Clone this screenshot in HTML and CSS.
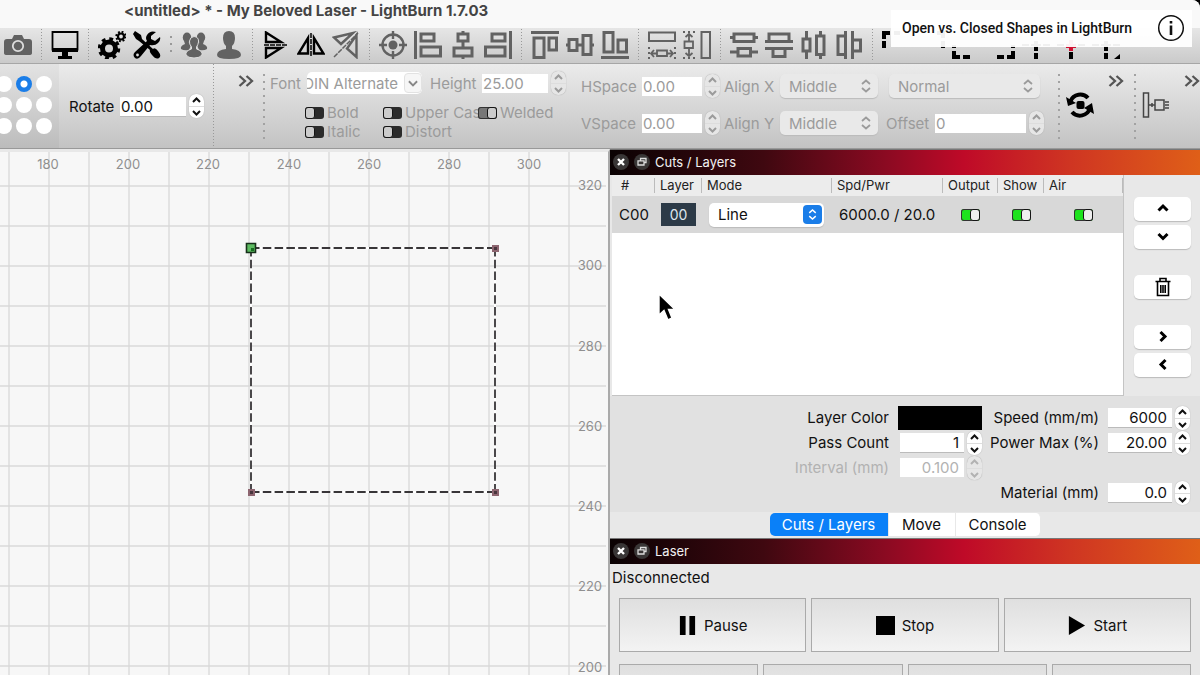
FILE: index.html
```html
<!DOCTYPE html>
<html lang="en">
<head>
<meta charset="utf-8">
<title>My Beloved Laser - LightBurn 1.7.03</title>
<link rel="stylesheet" href="styles.css">
</head>
<body>
<svg class="defs" aria-hidden="true">
  <symbol id="up" viewBox="0 0 14 12"><path d="M3.500 8 7 4.500 10.500 8" fill="none" stroke="currentColor" stroke-width="2"/></symbol>
  <symbol id="down" viewBox="0 0 14 12"><path d="M3.500 4 7 7.500 10.500 4" fill="none" stroke="currentColor" stroke-width="2"/></symbol>
  <symbol id="updown" viewBox="0 0 12 16"><path d="M2 6 6 2.500 10 6M2 10 6 13.500 10 10" fill="none" stroke="currentColor" stroke-width="1.800"/></symbol>
  <symbol id="more" viewBox="0 0 16 12"><path d="M1.500 1 7 6 1.500 11M8.500 1 14 6 8.500 11" fill="none" stroke="currentColor" stroke-width="2.300"/></symbol>
  <symbol id="close" viewBox="0 0 16 16"><circle cx="8" cy="8" r="8" fill="#393636"/><path d="M5 5 11 11M11 5 5 11" stroke="#fff" stroke-width="2.400"/></symbol>
  <symbol id="float" viewBox="0 0 16 16"><circle cx="8" cy="8" r="8" fill="#393636"/><path d="M6.500 6.500V4.500H12V8.500H10M4 6.800H10V11H4Z" fill="none" stroke="#ddd" stroke-width="1.300"/></symbol>
</svg>
<div class="app">
  <header class="titlebar"><h1>&lt;untitled&gt; * - My Beloved Laser - LightBurn 1.7.03</h1></header>

  <nav class="tools" aria-label="Main tools">
    <button class="tool grey" aria-label="Camera"><svg viewBox="0 0 28 28"><path d="M3 8H8L10 4H18L20 8H25Q28 8 28 11V22Q28 24 25 24H3Q0 24 0 22V11Q0 8 3 8Z" fill="currentColor"/><circle cx="14" cy="15" r="5.200" fill="none" stroke="#ddd" stroke-width="1.800"/></svg></button>
    <i class="sep"></i>
    <button class="tool" aria-label="Preview"><svg viewBox="0 0 28 28"><path d="M1.500 1H26.500V18.500H1.500Z" fill="none" stroke="currentColor" stroke-width="1.800"/><path d="M1 17H27V21H1ZM11 21H17V25H21V28H7V25H11Z" fill="currentColor"/></svg></button>
    <i class="sep"></i>
    <button class="tool" aria-label="Settings"><svg viewBox="0 0 28 28"><circle cx="11" cy="17.500" r="6.500" fill="none" stroke="currentColor" stroke-width="5"/><circle cx="11" cy="17.500" r="9.500" fill="none" stroke="currentColor" stroke-width="3.500" stroke-dasharray="3.730 3.730"/><circle cx="23" cy="5.500" r="3" fill="none" stroke="currentColor" stroke-width="2.200"/><circle cx="23" cy="5.500" r="4.700" fill="none" stroke="currentColor" stroke-width="2" stroke-dasharray="1.850 1.850"/></svg></button>
    <button class="tool" aria-label="Device settings"><svg viewBox="0 0 28 28"><path d="M2 0 8 4 9 8 20 18Q22 16 25 20Q29 25 26 27Q23 29 19 24Q16 21 17 19L6 10 3 8 0 3Z" fill="currentColor"/><path d="M27 6 22 10 18 8 18 5 23 1Q17-1 14 4Q12 7 14 10L2 21Q-1 24 2 27Q5 29 8 25L17 14Q22 15 25 12Q28 9 27 6Z" fill="currentColor"/><circle cx="4.500" cy="24" r="1.400" fill="#ddd"/></svg></button>
    <i class="sep grip"></i>
    <button class="tool grey" aria-label="Group"><svg viewBox="0 0 28 28"><g id="pair"><ellipse cx="7" cy="6.500" rx="4.200" ry="5" fill="currentColor"/><path d="M4 10 5 13Q0 15 1 18Q4 20 9 19L12 12Z" fill="currentColor"/></g><use href="#pair" transform="matrix(-1 0 0 1 28 0)"/><path d="M14 5.500Q19 6 18.500 11 18 14 16.500 16V18Q23 20 22 24Q20 27 14 27T6 24Q5 20 11.500 18V16Q9 13 9.500 10 10 6 14 5.500Z" fill="currentColor" stroke="#ddd" stroke-width="1"/></svg></button>
    <button class="tool grey" aria-label="Ungroup"><svg viewBox="0 0 28 28"><path d="M14 0Q20 0 20 7Q20 12 17 15V18Q26 19 26 24Q26 28 14 28T2 24Q2 19 11 18V15Q8 12 8 7Q8 0 14 0Z" fill="currentColor"/></svg></button>
    <i class="sep"></i>
    <button class="tool" aria-label="Flip vertical"><svg viewBox="0 0 28 28" fill="none" stroke="currentColor" stroke-width="2.400"><path d="M4 1.500V11H19ZM4 26.500V17H19Z"/><path d="M2 14H25" stroke-width="1.500" stroke-dasharray="5 1"/></svg></button>
    <button class="tool" aria-label="Flip horizontal"><svg viewBox="0 0 28 28" fill="none" stroke="currentColor" stroke-width="2.400"><path d="M1.500 22.500H11V7ZM26.500 22.500H17V7Z"/><path d="M14 2V26" stroke-width="1.500" stroke-dasharray="5 1"/></svg></button>
    <button class="tool grey" aria-label="Mirror across line"><svg viewBox="0 0 28 28" fill="none" stroke="currentColor" stroke-width="2.400"><path d="M2 6.500 21 2 9 13ZM24.500 4V26L15 17.500Z"/><path d="M2 26 26 2" stroke-width="1.500" stroke-dasharray="5 1"/></svg></button>
    <i class="sep"></i>
    <button class="tool grey" aria-label="Centre on page"><svg viewBox="0 0 28 28" fill="none" stroke="currentColor" stroke-width="2.400"><circle cx="14" cy="14" r="10.500"/><circle cx="14" cy="14" r="4.500" fill="currentColor" stroke="none"/><path d="M14 0V8M14 20V28M0 14H8M20 14H28"/></svg></button>
    <button class="tool grey" aria-label="Align left"><svg viewBox="0 0 28 28" fill="none" stroke="currentColor" stroke-width="3"><path d="M1.500 0V28M7 3H20V10H7ZM7 16H26.500V25H7Z"/></svg></button>
    <button class="tool grey" aria-label="Align centres vertically"><svg viewBox="0 0 28 28" fill="none" stroke="currentColor" stroke-width="3"><path d="M9 3H19V10H9ZM5 17H23V25H5ZM14 0V3M14 10V17M14 25V28"/></svg></button>
    <button class="tool grey" aria-label="Align right"><svg viewBox="0 0 28 28" fill="none" stroke="currentColor" stroke-width="3"><path d="M26.500 0V28M8 3H21V10H8ZM1.500 16H21V25H1.500Z"/></svg></button>
    <i class="sep"></i>
    <button class="tool grey" aria-label="Align top"><svg viewBox="0 0 28 28" fill="none" stroke="currentColor" stroke-width="3"><path d="M0 1.500H28M3 7H13V26.500H3ZM18 7H25.500V19H18Z"/></svg></button>
    <button class="tool grey" aria-label="Align centres horizontally"><svg viewBox="0 0 28 28" fill="none" stroke="currentColor" stroke-width="3"><path d="M3 8.500H11V19.500H3ZM17 4.500H25V23.500H17ZM0 14H3M11 14H17M25 14H28"/></svg></button>
    <button class="tool grey" aria-label="Align bottom"><svg viewBox="0 0 28 28" fill="none" stroke="currentColor" stroke-width="3"><path d="M0 26.500H28M3 1.500H12V21H3ZM17 9H25.500V21H17Z"/></svg></button>
    <i class="sep"></i>
    <button class="tool grey" aria-label="Same width"><svg viewBox="0 0 28 28" fill="none" stroke="currentColor" stroke-width="2"><path d="M1 1.500H27V10H1Z"/><path d="M9 19.500H19V25H9ZM3 22.500H9M19 22.500H25M6 19 3 22.500 6 26M22 19 25 22.500 22 26" stroke-width="1.800"/><path d="M1 16V28M27 16V28" stroke-dasharray="2 3"/></svg></button>
    <button class="tool grey" aria-label="Same height"><svg viewBox="0 0 28 28" fill="none" stroke="currentColor" stroke-width="2"><path d="M18.500 1H27V27H18.500Z"/><path d="M1.500 10.500H10V17H1.500ZM6 3V10M6 17V25M2.500 6 6 3 9.500 6M2.500 22 6 25 9.500 22" stroke-width="1.800"/><path d="M0 1H12M0 27H12" stroke-dasharray="2 3"/></svg></button>
    <i class="sep"></i>
    <button class="tool grey" aria-label="Distribute vertical gaps"><svg viewBox="0 0 28 28" fill="none" stroke="currentColor" stroke-width="3"><path d="M4 3H24V10.500H4ZM8 17.500H20.500V25H8ZM0 6.500H4M24 6.500H28M0 21H8M21 21H28"/></svg></button>
    <button class="tool grey" aria-label="Distribute vertical edges"><svg viewBox="0 0 28 28" fill="none" stroke="currentColor" stroke-width="3"><path d="M0 10.500H28M4 10V3H24V10M0 17.500H28M8 18V25.500H20V18"/></svg></button>
    <button class="tool grey" aria-label="Distribute horizontal gaps"><svg viewBox="0 0 28 28" fill="none" stroke="currentColor" stroke-width="3"><path d="M3 8H10V20H3ZM16.500 5H24V23.500H16.500ZM6.500 0V8M6.500 20V28M20.500 0V5M20.500 24V28"/></svg></button>
    <button class="tool grey" aria-label="Distribute horizontal edges"><svg viewBox="0 0 28 28" fill="none" stroke="currentColor" stroke-width="3"><path d="M10.500 0V28M10 5H3V23.500H10M17.500 0V28M18 9H25.500V20H18"/></svg></button>
    <i class="sep"></i>
    <button class="tool" aria-label="Move to top left"><svg viewBox="0 0 28 28" fill="none" stroke="currentColor" stroke-width="4"><path d="M2 8V2H8M2 10V17M12 2H18"/></svg></button>
    <button class="tool" aria-label="Move to top right"><svg viewBox="0 0 28 28" fill="none" stroke="currentColor" stroke-width="4"><path d="M20 2H26V7M26 10V17"/></svg></button>
    <button class="tool" aria-label="Move to bottom left"><svg viewBox="0 0 28 28" fill="none" stroke="currentColor" stroke-width="4"><path d="M2 14V17M2 20V26H8M11 26H18"/></svg></button>
    <button class="tool" aria-label="Move to bottom right"><svg viewBox="0 0 28 28" fill="none" stroke="currentColor" stroke-width="4"><path d="M26 14V17M26 20V26H20M17 26H10"/></svg></button>
    <button class="tool" aria-label="Move to centre"><svg viewBox="0 0 28 28" fill="none" stroke="currentColor"><path d="M14 10V20M14 22V28" stroke-width="4"/><path d="M0 14H7M9 14H19M21 14H28" stroke-width="2"/></svg></button>
    <button class="tool" aria-label="Move laser to selection centre"><svg viewBox="0 0 28 28" fill="none" stroke="currentColor"><path d="M14 21V28" stroke-width="4"/><path d="M0 14H7M21 14H28" stroke-width="2"/><path d="M14 9V20M9 15H19" stroke="#cf1030" stroke-width="4"/></svg></button>
    <button class="tool" aria-label="Move to position"><svg viewBox="0 0 28 28" fill="none" stroke="currentColor"><path d="M14 10V20M14 22V28" stroke-width="4"/><path d="M0 14H7M9 14H19M21 14H28" stroke-width="2"/><path d="M28 23V28H22Z" fill="currentColor" stroke="none"/></svg></button>
  </nav>

  <section class="options" aria-label="Text and transform options">
    <fieldset class="anchor" aria-label="Anchor point">
      <input type="radio" name="anchor" aria-label="Top left"><input type="radio" name="anchor" aria-label="Top" checked><input type="radio" name="anchor" aria-label="Top right">
      <input type="radio" name="anchor" aria-label="Left"><input type="radio" name="anchor" aria-label="Centre"><input type="radio" name="anchor" aria-label="Right">
      <input type="radio" name="anchor" aria-label="Bottom left"><input type="radio" name="anchor" aria-label="Bottom"><input type="radio" name="anchor" aria-label="Bottom right">
    </fieldset>
    <div class="rotate">
      <label for="rotate">Rotate</label><input class="num wide" id="rotate" value="0.00">
      <span class="spin"><button aria-label="Increase"><svg><use href="#up"/></svg></button><button aria-label="Decrease"><svg><use href="#down"/></svg></button></span>
    </div>
    <button class="more" aria-label="More"><svg><use href="#more"/></svg></button>
    <i class="handle"></i>

    <div class="font off">
      <div class="fontrow">
        <label for="font">Font</label>
        <span class="combo"><input id="font" value="DIN Alternate" disabled><button disabled aria-label="Show fonts"><svg viewBox="0 0 12 12"><path d="M2.500 4.500 6 8 9.500 4.500" fill="none" stroke="currentColor" stroke-width="1.600"/></svg></button></span>
        <label class="height" for="height">Height</label><input class="num wide" id="height" value="25.00" disabled>
        <span class="spin"><button disabled aria-label="Increase"><svg><use href="#up"/></svg></button><button disabled aria-label="Decrease"><svg><use href="#down"/></svg></button></span>
      </div>
      <div class="switches">
        <label><input class="switch" type="checkbox" disabled>Bold</label>
        <label><input class="switch" type="checkbox" disabled>Upper Case</label>
        <label><input class="switch" type="checkbox" checked disabled>Welded</label>
        <label><input class="switch" type="checkbox" disabled>Italic</label>
        <label><input class="switch" type="checkbox" disabled>Distort</label>
      </div>
    </div>

    <div class="spacing off">
      <label for="hs">HSpace</label><input class="num" id="hs" value="0.00" disabled>
      <span class="spin"><button disabled aria-label="Increase"><svg><use href="#up"/></svg></button><button disabled aria-label="Decrease"><svg><use href="#down"/></svg></button></span>
      <label for="ax">Align X</label>
      <span class="pick"><select id="ax" disabled><option>Middle</option></select><svg><use href="#updown"/></svg></span>
      <label for="vs">VSpace</label><input class="num" id="vs" value="0.00" disabled>
      <span class="spin"><button disabled aria-label="Increase"><svg><use href="#up"/></svg></button><button disabled aria-label="Decrease"><svg><use href="#down"/></svg></button></span>
      <label for="ay">Align Y</label>
      <span class="pick"><select id="ay" disabled><option>Middle</option></select><svg><use href="#updown"/></svg></span>
    </div>
    <div class="mode off">
      <span class="pick"><select aria-label="Text mode" disabled><option>Normal</option></select><svg><use href="#updown"/></svg></span>
      <div class="offset">
        <label for="offset">Offset</label><input class="num" id="offset" value="0" disabled>
        <span class="spin"><button disabled aria-label="Increase"><svg><use href="#up"/></svg></button><button disabled aria-label="Decrease"><svg><use href="#down"/></svg></button></span>
      </div>
    </div>
    <i class="handle"></i>
    <button class="extra" aria-label="Rotary setup"><svg viewBox="0 0 28 28"><path d="M4.500 10A10.500 10.500 0 0 1 22 7M24 17A10.500 10.500 0 0 1 6 21" fill="none" stroke="currentColor" stroke-width="4"/><path d="M0 6 2 15 10 12ZM28 23 26 12 18 17Z" fill="currentColor"/><rect x="10.500" y="10" width="8" height="8" rx="2" fill="currentColor"/></svg></button>
    <button class="more" aria-label="More"><svg><use href="#more"/></svg></button>
    <i class="handle"></i>
    <button class="extra slim" aria-label="Dock shapes"><svg viewBox="0 0 28 28" fill="none" stroke="#444" stroke-width="1.500"><path d="M1.500 2H6.500V26H1.500ZM13 9H22V19H13ZM7 14H13M10 12V16M23 11H27M23 14H27M23 17H27"/></svg></button>
    <button class="more last" aria-label="More"><svg><use href="#more"/></svg></button>
  </section>

  <main class="work">
    <section class="canvas" aria-label="Workspace">
      <svg viewBox="0 0 608 526" preserveAspectRatio="xMinYMin slice">
        <defs><pattern id="grid" x="8" y="36" width="40" height="40" patternUnits="userSpaceOnUse"><path d="M1 0V40M0 1H40" stroke="#dadada" stroke-width="1.400"/></pattern></defs>
        <rect y="3" width="606" height="523" fill="url(#grid)"/>
        <g class="ruler" text-anchor="middle">
          <text x="48" y="20">180</text><text x="128" y="20">200</text><text x="208" y="20">220</text><text x="289" y="20">240</text><text x="369" y="20">260</text><text x="449" y="20">280</text><text x="529" y="20">300</text>
          <text x="590" y="41">320</text><text x="590" y="121">300</text><text x="590" y="202">280</text><text x="590" y="282">260</text><text x="590" y="362">240</text><text x="590" y="442">220</text><text x="590" y="523">200</text>
        </g>
        <path d="M251 99H495M251 343H495M251 99V343M495 99V343" fill="none" stroke="#fff" stroke-width="2"/>
        <path d="M251 99H495M251 343H495M251 99V343M495 99V343" fill="none" stroke="#383538" stroke-width="1.800" stroke-dasharray="8.500 3.300"/>
        <path d="M492 96h7v7h-7ZM492 340h7v7h-7ZM248 340h7v7h-7Z" fill="#8d6570"/>
        <path d="M494 98h3v3h-3ZM494 342h3v3h-3ZM250 342h3v3h-3Z" fill="#49353d"/>
        <path d="M246.500 94.500h9v9h-9Z" fill="#5dbb61" stroke="#17301a" stroke-width="1.600"/><path d="M251 99h3v3h-3Z" fill="#176c20"/>
      </svg>
    </section>

    <aside class="docks">
      <header class="dockbar"><button aria-label="Close"><svg><use href="#close"/></svg></button><button aria-label="Float"><svg><use href="#float"/></svg></button><h2>Cuts / Layers</h2></header>
      <div class="layers">
        <div class="list">
          <table>
            <colgroup><col class="c1"><col class="c2"><col class="c3"><col class="c4"><col class="c5"><col class="c6"><col class="c7"></colgroup>
            <thead><tr><th>#</th><th>Layer</th><th>Mode</th><th>Spd/Pwr</th><th>Output</th><th>Show</th><th>Air</th></tr></thead>
            <tbody><tr>
              <td>C00</td><td><span class="chip">00</span></td>
              <td><span class="pick live"><select aria-label="Mode"><option>Line</option></select><svg><use href="#updown"/></svg></span></td>
              <td>6000.0 / 20.0</td>
              <td class="mid"><input class="switch go" type="checkbox" checked aria-label="Output"></td>
              <td class="mid"><input class="switch go" type="checkbox" checked aria-label="Show"></td>
              <td class="mid"><input class="switch go" type="checkbox" checked aria-label="Air"></td>
            </tr></tbody>
          </table>
          <svg class="pointer" viewBox="0 0 18 28"><path d="M1 1V22L6 17.500 10 27 14 25 10.500 16.500H17Z" fill="#000" stroke="#fff" stroke-width="1.400"/></svg>
        </div>
        <div class="order">
          <button aria-label="Move up"><svg viewBox="0 0 20 20"><path d="M5.500 11.500 10 7 14.500 11.500"/></svg></button>
          <button aria-label="Move down"><svg viewBox="0 0 20 20"><path d="M5.500 7 10 11.500 14.500 7"/></svg></button>
          <button class="apart" aria-label="Delete"><svg class="bin" viewBox="0 0 20 20"><path d="M2.500 4.500H17.500M7 4V1.500H13V4M4.500 5V18.500H15.500V5M7.800 8V16M10 8V16M12.200 8V16"/></svg></button>
          <button class="apart" aria-label="Next"><svg viewBox="0 0 20 20"><path d="M7.500 5 12 9.500 7.500 14"/></svg></button>
          <button aria-label="Previous"><svg viewBox="0 0 20 20"><path d="M12.500 5 8 9.500 12.500 14"/></svg></button>
        </div>
      </div>
      <div class="params">
        <span>Layer Color</span><button class="swatch" aria-label="Layer color"></button>
        <label for="speed">Speed (mm/m)</label>
        <span class="field"><input class="num" id="speed" value="6000"><span class="spin"><button aria-label="Increase"><svg><use href="#up"/></svg></button><button aria-label="Decrease"><svg><use href="#down"/></svg></button></span></span>
        <label for="pass">Pass Count</label>
        <span class="field"><input class="num" id="pass" value="1"><span class="spin"><button aria-label="Increase"><svg><use href="#up"/></svg></button><button aria-label="Decrease"><svg><use href="#down"/></svg></button></span></span>
        <label for="power">Power Max (%)</label>
        <span class="field"><input class="num" id="power" value="20.00"><span class="spin"><button aria-label="Increase"><svg><use href="#up"/></svg></button><button aria-label="Decrease"><svg><use href="#down"/></svg></button></span></span>
        <label class="dim" for="interval">Interval (mm)</label>
        <span class="field dim"><input class="num" id="interval" value="0.100" disabled><span class="spin"><button disabled aria-label="Increase"><svg><use href="#up"/></svg></button><button disabled aria-label="Decrease"><svg><use href="#down"/></svg></button></span></span>
        <label class="material" for="material">Material (mm)</label>
        <span class="field"><input class="num" id="material" value="0.0"><span class="spin"><button aria-label="Increase"><svg><use href="#up"/></svg></button><button aria-label="Decrease"><svg><use href="#down"/></svg></button></span></span>
      </div>
      <div class="tabs" role="tablist"><button role="tab" aria-selected="true">Cuts / Layers</button><button role="tab" aria-selected="false">Move</button><button role="tab" aria-selected="false">Console</button></div>

      <header class="dockbar"><button aria-label="Close"><svg><use href="#close"/></svg></button><button aria-label="Float"><svg><use href="#float"/></svg></button><h2>Laser</h2></header>
      <p class="status">Disconnected</p>
      <div class="run">
        <button><svg viewBox="0 0 20 20"><path d="M2 0H8V20H2ZM12 0H18V20H12Z"/></svg>Pause</button>
        <button><svg viewBox="0 0 20 20"><path d="M0 0H20V20H0Z"/></svg>Stop</button>
        <button><svg viewBox="0 0 20 20"><path d="M2 0 19 10 2 20Z"/></svg>Start</button>
      </div>
      <div class="run four"><button aria-label="Frame"></button><button aria-label="Frame circle"></button><button aria-label="Save file"></button><button aria-label="Run file"></button></div>
    </aside>
  </main>

  <div class="card"><a href="#">Open vs. Closed Shapes in LightBurn</a><button aria-label="More information"><svg viewBox="0 0 28 28"><circle cx="14" cy="14" r="12.300" fill="none" stroke="#111" stroke-width="1.500"/><path d="M14 11.500V21M14 7V9.500" stroke="#111" stroke-width="2.600"/></svg></button></div>
</div>
</body>
</html>
```
FILE: styles.css
```css
*, *::before { box-sizing: border-box; }
body { margin: 0; background: #000; font-family: Inter, "Liberation Sans", sans-serif; font-size: 15px; color: #111; overflow: hidden; }
button, input, select { font: inherit; color: inherit; margin: 0; padding: 0; border: 0; background: none; border-radius: 0; }
svg { display: block; }
.defs { position: absolute; width: 0; height: 0; }
.app { position: relative; display: flex; flex-direction: column; height: 100vh; background: #e8e8e8; border-top-right-radius: 8px; overflow: hidden; }

.titlebar { flex: none; height: 28px; padding-left: 124px; background: #f9f9f9; }
.titlebar h1 { margin: 0; font-size: 15px; line-height: 22px; font-weight: 700; color: #444; white-space: nowrap; }

.tools { flex: none; display: flex; align-items: center; gap: 7px; height: 36px; padding: 0 0 1px 4px; background: linear-gradient(#e6e6e6, #cacaca); border-bottom: 1px solid #a6a6a6; overflow: hidden; }
.tool { flex: none; width: 28px; height: 28px; color: #000; }
.tool svg { width: 28px; height: 28px; }
.grey { color: #626262; }
.sep { flex: none; width: 5px; height: 32px; background: repeating-linear-gradient(#999 0 1px, transparent 1px 3px) center / 1px 100% no-repeat; }
.grip { height: 18px; background: repeating-linear-gradient(#999 0 2px, transparent 2px 7px) center / 2px 100% no-repeat; }

.options { flex: none; display: flex; height: 85px; background: linear-gradient(#ebebeb, #c3c3c3); border-bottom: 1px solid #999; overflow: hidden; }
.off { color: #9b9b9b; }
.anchor { flex: none; display: grid; grid-template-columns: repeat(3, 16px); gap: 5px 4px; align-content: start; width: 63px; margin: 0 0 0 -4px; padding: 12px 0 0; border: 0; background: rgba(0, 0, 0, .03); }
.anchor input { appearance: none; width: 16px; height: 16px; border-radius: 50%; background: #fff; }
.anchor input:checked { background: radial-gradient(#fff 0 3px, #1a7de8 4px); }
.rotate { flex: none; display: flex; align-items: center; width: 155px; padding-left: 10px; background: repeating-linear-gradient(#999 0 1px, transparent 1px 3px) right / 1px 100% no-repeat; }
.rotate label { width: 51px; }
.num { width: 60px; height: 19px; padding: 0 1px; background: #fff; }
.num:enabled { box-shadow: 0 1px 0 #bbb; }
.num.wide { width: 66px; }
.spin { flex: none; display: flex; flex-direction: column; width: 15px; height: 24px; margin-left: 3px; border-radius: 7px; background: #fff; box-shadow: 0 0 1px #999; }
.spin button { display: block; height: 12px; width: 100%; }
.spin button + button { border-top: 1px solid #ddd; }
.spin svg { width: 15px; height: 12px; }
.off .spin, .dim .spin { background: #e6e6e6; }
.more { flex: none; align-self: flex-start; width: 16px; height: 12px; margin: 11px 9px 0 24px; color: #555; }
.more svg { width: 16px; height: 12px; }
.handle { flex: none; width: 2px; margin: 10px 0 9px; background: repeating-linear-gradient(#a2a2a2 0 2px, transparent 2px 7px); }

.font { flex: none; width: 316px; padding: 7px 0 0 5px; }
.fontrow { display: flex; align-items: center; height: 24px; margin-bottom: 8px; }
.fontrow label { width: 37px; }
.fontrow .height { width: 52px; margin-left: 8px; }
.combo { display: flex; width: 115px; height: 22px; border-radius: 5px; background: #fff; overflow: hidden; }
.combo input { width: 96px; direction: rtl; padding-right: 5px; }
.combo button { width: 19px; margin: 1px; border-radius: 4px; background: #f6f6f6; border: 1px solid #e2e2e2; }
.combo svg { width: 16px; height: 14px; color: #888; }
.switches { display: grid; grid-template-columns: 78px 95px 1fr; grid-auto-rows: 19px; padding-left: 35px; align-items: center; }
.switches label { display: flex; align-items: center; gap: 3px; white-space: nowrap; min-width: 0; }
.switch { flex: none; appearance: none; display: flex; width: 19px; height: 12px; background: #2b2b2b; border-radius: 3px; }
.switch::before { content: ""; width: 10px; height: 12px; border: 1px solid #151515; border-radius: 3px; background: #ccc; }
.switch:checked { justify-content: flex-end; background: #777; box-shadow: inset 0 0 0 1px #333; }
.switch.go:checked { background: #1de31d; }
.switch.go::before { background: #eee; }

.spacing { flex: none; display: grid; grid-template-columns: 61px 60px 22px 56px 98px; grid-auto-rows: 24px; row-gap: 13px; align-content: start; align-items: center; padding-top: 10px; }
.pick { display: grid; grid-template-columns: 1fr; height: 24px; align-items: center; }
.pick select { grid-area: 1 / 1; appearance: none; width: 100%; height: 100%; padding-left: 9px; border-radius: 5px; background: #e9e9e9; box-shadow: 0 1px 1px #bbb; opacity: 1; }
.pick svg { grid-area: 1 / 1; justify-self: end; width: 12px; height: 16px; margin-right: 6px; pointer-events: none; }
.mode { flex: none; display: flex; flex-direction: column; gap: 13px; width: 180px; padding: 10px 0 0 11px; }
.mode .pick { width: 151px; }
.offset { display: flex; align-items: center; height: 24px; margin-left: -3px; }
.offset label { width: 49px; }
.offset .num { width: 91px; }
.extra { flex: none; width: 28px; height: 28px; margin: 27px 0 0 6px; color: #000; }
.extra svg { width: 28px; height: 28px; }
.options .extra + .more { margin-left: 14px; margin-right: 10px; }

.work { flex: 1; min-height: 0; display: grid; grid-template-columns: 61fr 59fr; }
.canvas { min-width: 0; overflow: hidden; background: #f7f7f7; border-top: 3px solid #e8e8e8; border-right: 2px solid #aaa; }
.canvas svg { width: 100%; height: 526px; margin-top: -3px; }
.ruler { font-size: 13px; fill: #8f8f8f; }

.docks { min-width: 0; overflow: hidden; }
.dockbar { display: flex; align-items: center; gap: 5px; height: 26px; padding: 0 0 2px 3px; background: linear-gradient(90deg, #0a0203, #3f0810 26%, #8c0a22 47%, #bf0a28 60%, #cf3522 78%, #df5f18); border-top: 1px solid #777; color: #f2f2f2; }
.dockbar button, .dockbar svg { width: 16px; height: 16px; }
.dockbar h2 { margin: 0; font-size: 13px; font-weight: 400; }

.layers { display: flex; height: 221px; }
.list { position: relative; flex: 1; margin-left: 2px; background: #fff; border-right: 1px solid #c4c4c4; border-bottom: 1px solid #c4c4c4; }
table { width: 100%; border-collapse: collapse; table-layout: fixed; }
.c1 { width: 43px; } .c2 { width: 47px; } .c3 { width: 130px; } .c4 { width: 111px; } .c5 { width: 55px; } .c6 { width: 46px; }
thead { background: #ececec; }
th { height: 21px; padding: 0 0 2px 5px; font-size: 13px; line-height: 16px; font-weight: 400; text-align: left; color: #222; background: linear-gradient(#bbb, #bbb) right 3px / 1px 15px no-repeat; }
th:first-child { padding-left: 9px; }
td { height: 37px; padding: 0 0 0 7px; background: #d8d8d8; white-space: nowrap; }
.mid { padding: 0; }
.mid .switch { margin: 0 auto; }
.chip { display: block; width: 35px; height: 23px; margin-left: -1px; line-height: 23px; text-align: center; font-size: 14px; color: #dfe7ee; background: #2c3a47; }
.live { width: 115px; }
.live select { background: #fff; }
.live svg { width: 19px; height: 19px; margin-right: 2px; padding: 3px; border-radius: 4px; background: #1a7de8; color: #fff; }
.pointer { position: absolute; left: 46px; top: 118px; width: 18px; height: 28px; }
.order { display: flex; flex-direction: column; gap: 4px; width: 76px; padding: 22px 9px 0 10px; }
.order button { height: 24px; border-radius: 5px; background: #fff; box-shadow: 0 1px 1px #bbb; }
.order .apart { margin-top: 22px; }
.order svg { width: 20px; height: 20px; margin: 0 auto; fill: none; stroke: #000; stroke-width: 3; }
.order .bin { stroke-width: 1.6; }

.params { display: grid; grid-template-columns: 1fr 84px 108px 82px; grid-auto-rows: 25px; column-gap: 9px; align-items: center; justify-items: end; padding: 9px 10px 7px 0; background: #e1e1e1; white-space: nowrap; }
.params .num { width: 64px; text-align: right; padding-right: 5px; }
.field { display: flex; align-items: center; }
.swatch { width: 84px; height: 24px; background: #000; }
.dim { color: #b2b2b2; }
.material { grid-area: 4 / 3; }
.material + .field { grid-area: 4 / 4; }
.tabs { display: flex; justify-content: center; height: 26px; padding: 1px 0 2px; }
.tabs button { width: 67px; background: #fff; border-right: 1px solid #e8e8e8; }
.tabs button:first-child { width: 119px; color: #fff; background: #0a80f8; border-radius: 5px 0 0 5px; }
.tabs button:last-child { width: 85px; border-radius: 0 5px 5px 0; }
.status { margin: 0; padding: 4px 2px 11px; line-height: 19px; }
.run { display: grid; grid-template-columns: repeat(3, 1fr); gap: 5px; padding: 0 9px 12px; }
.run button { display: flex; align-items: center; justify-content: center; gap: 7px; height: 54px; border: 1px solid #aaa; background: linear-gradient(#dfdfdf, #f3f3f3); }
.run svg { width: 19px; height: 19px; fill: #000; }
.four { grid-template-columns: repeat(4, 1fr); }

.card { position: absolute; top: 10px; right: 8px; display: flex; align-items: center; justify-content: space-between; width: 301px; height: 37px; padding: 0 7px 2px 11px; background: rgba(255, 255, 255, .94); }
.card a { font-family: Roboto, sans-serif; font-size: 14px; font-weight: 500; color: #111; text-decoration: none; white-space: nowrap; }
.card svg { width: 28px; height: 28px; }
```
